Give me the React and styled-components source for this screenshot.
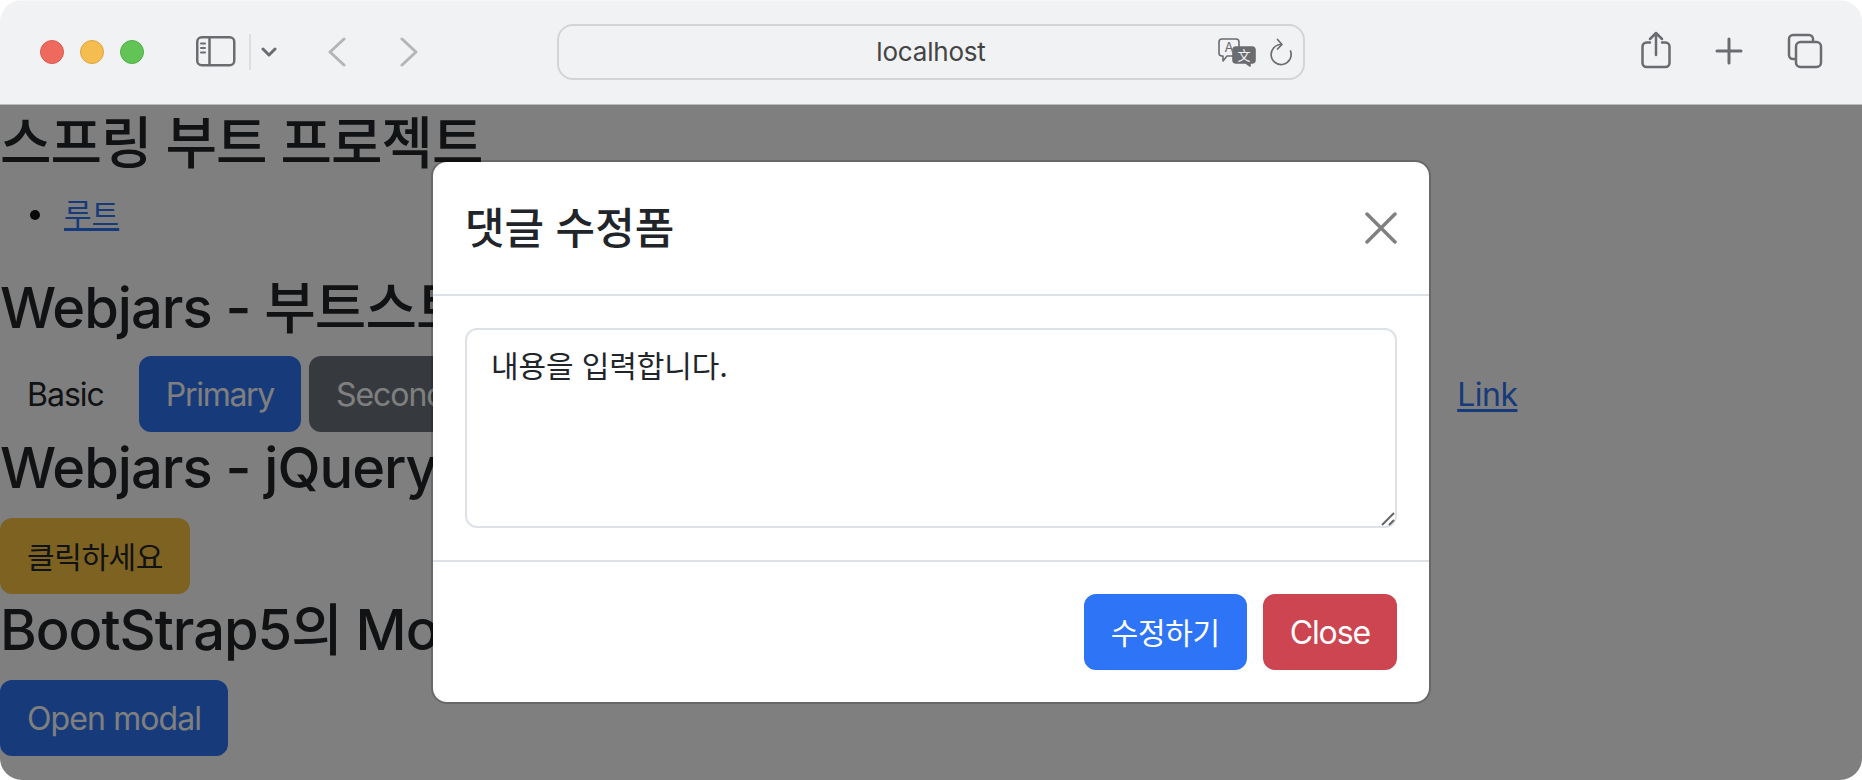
import React from 'react';
import styled, { createGlobalStyle } from 'styled-components';

const GlobalStyle = createGlobalStyle`
  * { box-sizing: border-box; }
  html, body { margin: 0; padding: 0; background: #fff; }
  body {
    font-family: Inter, "Noto Sans CJK KR", sans-serif;
    font-size: 32px;
    line-height: 48px;
    color: #212529;
  }
`;

const Win = styled.div`
  width: 1862px;
  height: 780px;
  border-radius: 22px;
  overflow: hidden;
  display: flex;
  flex-direction: column;
  background: #fff;
`;

const Toolbar = styled.header`
  height: 104px;
  flex: none;
  display: flex;
  align-items: flex-start;
  background: #f1f2f4;
  border-top: 1px solid #f8f8f9;
  padding-left: 40px;
  color: #6b6c70;
`;

const Lights = styled.div`
  display: flex;
  gap: 16px;
  margin: 39px 52px 0 0;
`;

const Light = styled.span`
  width: 24px;
  height: 24px;
  border-radius: 50%;
  background: ${(p) => p.$color};
  border: 1px solid ${(p) => p.$edge};
`;

const Icon = styled.svg`
  flex: none;
  display: block;
  margin: ${(p) => p.$m || 0};
  fill: none;
  stroke: currentColor;
  stroke-linecap: round;
  stroke-linejoin: round;
  color: ${(p) => p.$color || 'inherit'};
`;

const Divider = styled.span`
  width: 2px;
  height: 36px;
  flex: none;
  margin: 33px 10px 0 13px;
  background: #dddee1;
`;

const AddressBar = styled.div`
  width: 748px;
  height: 56px;
  flex: none;
  margin: 23px 0 0 139px;
  padding-left: 85px;
  border: 2px solid #d3d4d7;
  border-radius: 16px;
  display: flex;
  align-items: center;
`;

const Host = styled.span`
  flex: 1;
  text-align: center;
  font-size: 26px;
  line-height: 52px;
  letter-spacing: -0.2px;
  color: #444;
`;

const Page = styled.main`
  flex: 1;
  position: relative;
  overflow: hidden;
  border-top: 1px solid #bbb;
`;

const Heading = styled.h3`
  margin: 0 0 ${(p) => p.$bottom ?? 16}px;
  font-size: 56px;
  line-height: 67px;
  font-weight: 500;
  letter-spacing: -1px;
  white-space: nowrap;
  padding-top: ${(p) => p.$top || 0}px;
`;

const LinkList = styled.ul`
  margin: 0 0 35px;
  padding-left: 64px;
  line-height: 52px;
  list-style: none;

  li {
    position: relative;
  }

  li::before {
    content: '';
    position: absolute;
    left: -34px;
    top: 22px;
    width: 10px;
    height: 10px;
    border-radius: 50%;
    background: #111;
  }
`;

const PlainLink = styled.a`
  color: #2e74f6;
  font-size: 30px;
  text-decoration: underline;
  text-underline-offset: 3px;
`;

const Row = styled.div`
  display: flex;
  gap: 8px;
  white-space: nowrap;
`;

const Btn = styled.button`
  flex: none;
  height: 76px;
  padding: 13px 25px 11px;
  border: 2px solid ${(p) => p.$bg || 'transparent'};
  border-radius: 12px;
  background: ${(p) => p.$bg || 'transparent'};
  color: ${(p) => p.$fg || '#212529'};
  font: inherit;
  font-size: ${(p) => (p.$ko ? 30 : 32)}px;
  line-height: 48px;
  letter-spacing: ${(p) => p.$ls ?? (p.$ko ? -0.4 : -1.3)}px;
  text-decoration: ${(p) => (p.$link ? 'underline' : 'none')};
  text-underline-offset: 3px;
`;

const Backdrop = styled.div`
  position: absolute;
  inset: 0;
  background: rgba(0, 0, 0, 0.5);
`;

const Modal = styled.section`
  position: absolute;
  left: 431px;
  top: 55px;
  width: 1000px;
  background: #fff;
  border: 2px solid rgba(0, 0, 0, 0.175);
  border-radius: 16px;
  background-clip: padding-box;
`;

const ModalHeader = styled.div`
  height: 134px;
  padding: 0 32px;
  display: flex;
  align-items: center;
  justify-content: space-between;
  border-bottom: 2px solid #dee2e6;
`;

const ModalTitle = styled.h5`
  margin: 0;
  font-size: 43px;
  line-height: 60px;
  font-weight: 500;
`;

const ModalBody = styled.div`
  position: relative;
  padding: 32px;
`;

const Area = styled.textarea`
  display: block;
  width: 100%;
  height: 200px;
  padding: 12px 24px;
  border: 2px solid #dee2e6;
  border-radius: 12px;
  color: #212529;
  font: inherit;
  font-size: 30px;
  line-height: 48px;
  letter-spacing: -0.1px;
  outline: none;
  resize: none;
`;

const Grip = styled.svg`
  position: absolute;
  right: 34px;
  bottom: 34px;
  stroke: #666;
  stroke-width: 2;
  fill: none;
`;

const ModalFooter = styled.div`
  padding: 32px;
  display: flex;
  justify-content: flex-end;
  gap: 16px;
  border-top: 2px solid #dee2e6;
`;

const App = () => (
  <>
    <GlobalStyle />
    <Win>
      <Toolbar>
        <Lights>
          <Light $color="#ee6a5f" $edge="#d85a50" />
          <Light $color="#f5bd4f" $edge="#dca63f" />
          <Light $color="#61c454" $edge="#52ad46" />
        </Lights>
        <Icon width="40" height="31" viewBox="0 0 40 31" strokeWidth="2.5" $m="35px 0 0 0">
          <rect x="1.25" y="1.25" width="37" height="28" rx="4.5" />
          <path d="M13.5 1.5V29" />
          <path d="M5 7.5h4M5 12h4M5 16.5h4" strokeWidth="2" />
        </Icon>
        <Divider />
        <Icon width="16" height="11" viewBox="0 0 16 11" strokeWidth="3" $m="46px 0 0 0">
          <path d="M2 2l6 6 6-6" />
        </Icon>
        <Icon width="18" height="30" viewBox="0 0 18 30" strokeWidth="3" $color="#b4b5b7" $m="36px 0 0 51px">
          <path d="M16 2L2 15l14 13" />
        </Icon>
        <Icon width="18" height="30" viewBox="0 0 18 30" strokeWidth="3" $color="#b4b5b7" $m="36px 0 0 54px">
          <path d="M2 2l14 13L2 28" />
        </Icon>
        <AddressBar>
          <Host>localhost</Host>
          <Icon width="38" height="29" viewBox="0 0 38 29" strokeWidth="1.6" $m="0 13px 0 0">
            <path d="M4 1h14a3 3 0 0 1 3 3v11a3 3 0 0 1-3 3H9l-4 5v-5H4a3 3 0 0 1-3-3V4a3 3 0 0 1 3-3z" />
            <text x="11" y="14" fontSize="13" textAnchor="middle" fontFamily="Inter, sans-serif" fill="currentColor" stroke="none">A</text>
            <path d="M18 9h16a3 3 0 0 1 3 3v10a3 3 0 0 1-3 3h-2v3l-4-3H18a3 3 0 0 1-3-3V12a3 3 0 0 1 3-3z" fill="currentColor" />
            <text x="26" y="22" fontSize="13" textAnchor="middle" fontFamily="Noto Sans CJK SC, sans-serif" fill="#f1f2f4" stroke="none">文</text>
          </Icon>
          <Icon width="24" height="28" viewBox="0 0 24 28" strokeWidth="1.7" $m="0 10px 0 0">
            <path d="M12 6.5A10 10 0 1 0 21.5 13" />
            <path d="M8.5 1.5l4.5 5-4.5 4.5" />
          </Icon>
        </AddressBar>
        <Icon width="30" height="38" viewBox="0 0 30 38" strokeWidth="2.5" $m="30px 0 0 336px">
          <path d="M9 11.5H5.5a4 4 0 0 0-4 4V32a4 4 0 0 0 4 4h19a4 4 0 0 0 4-4V15.5a4 4 0 0 0-4-4H21" />
          <path d="M15 2.5V24M9 8l6-6 6 6" />
        </Icon>
        <Icon width="28" height="28" viewBox="0 0 28 28" strokeWidth="3" $m="36px 0 0 44px">
          <path d="M14 2v24M2 14h24" />
        </Icon>
        <Icon width="36" height="36" viewBox="0 0 36 36" strokeWidth="2.5" $m="32px 0 0 44px">
          <path d="M8.5 26H6a4 4 0 0 1-4-4V6a4 4 0 0 1 4-4h16a4 4 0 0 1 4 4v2.5" />
          <rect x="9" y="9" width="25" height="25" rx="4.5" />
        </Icon>
      </Toolbar>
      <Page>
        <Heading $top={5} $bottom={11}>스프링 부트 프로젝트</Heading>
        <LinkList>
          <li><PlainLink href="#">루트</PlainLink></li>
        </LinkList>
        <Heading $bottom={14}>Webjars - 부트스트랩</Heading>
        <Row>
          <Btn $ls={-1}>Basic</Btn>
          <Btn $bg="#2e74f6" $fg="#fff">Primary</Btn>
          <Btn $bg="#6c757d" $fg="#fff" $ls={-1.06}>Secondary</Btn>
          <Btn $bg="#198754" $fg="#fff" $ls={-1.06}>Success</Btn>
          <Btn $bg="#cc4550" $fg="#fff" $ls={-1.06}>Danger</Btn>
          <Btn $bg="#fac442" $ls={-1.06}>Warning</Btn>
          <Btn $bg="#0dcaf0" $ls={-1.06}>Info</Btn>
          <Btn $bg="#f8f9fa" $ls={-1.06}>Light</Btn>
          <Btn $bg="#212529" $fg="#fff" $ls={-1.06}>Dark</Btn>
          <Btn $link $fg="#2e74f6" $ls={-0.5}>Link</Btn>
        </Row>
        <Heading $top={3}>Webjars - jQuery</Heading>
        <Btn $bg="#fac442" $ko>클릭하세요</Btn>
        <Heading $top={3}>BootStrap5의 Modal</Heading>
        <Btn $bg="#2e74f6" $fg="#fff" $ls={-0.9}>Open modal</Btn>
        <Backdrop />
        <Modal>
          <ModalHeader>
            <ModalTitle>댓글 수정폼</ModalTitle>
            <Icon width="32" height="32" viewBox="0 0 32 32" strokeWidth="3.5" $color="#808080">
              <path d="M2 2l28 28M30 2L2 30" />
            </Icon>
          </ModalHeader>
          <ModalBody>
            <Area defaultValue="내용을 입력합니다." />
            <Grip width="14" height="15" viewBox="0 0 14 15">
              <path d="M1 14L13 2M8 14l5-5" />
            </Grip>
          </ModalBody>
          <ModalFooter>
            <Btn $bg="#2e74f6" $fg="#fff" $ko>수정하기</Btn>
            <Btn $bg="#cc4550" $fg="#fff" $ls={-1.1}>Close</Btn>
          </ModalFooter>
        </Modal>
      </Page>
    </Win>
  </>
);

export default App;
